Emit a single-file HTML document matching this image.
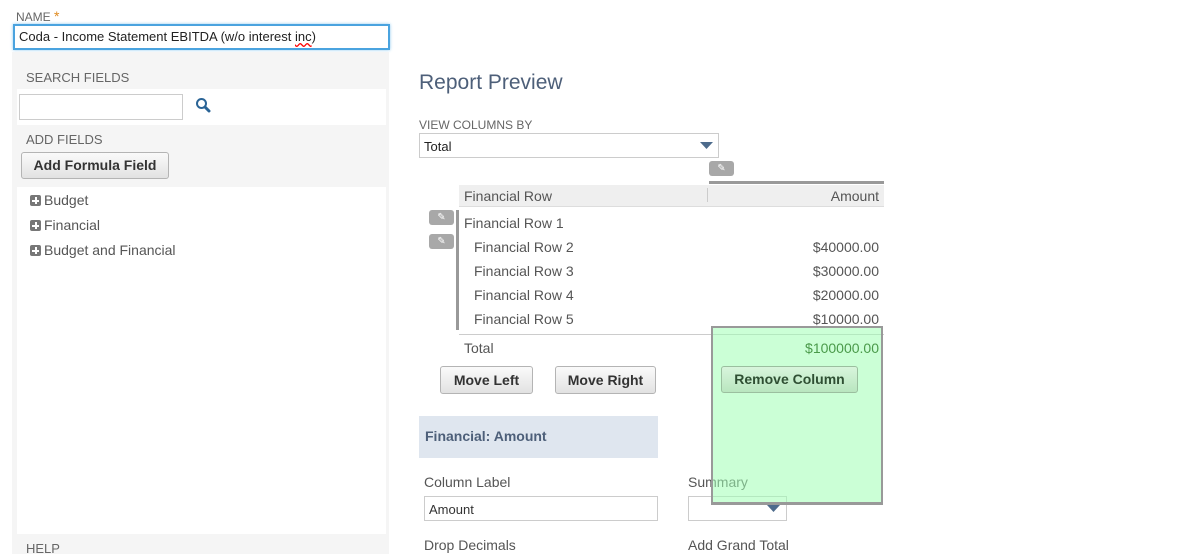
<!DOCTYPE html>
<html><head><meta charset="utf-8"><style>
*{box-sizing:border-box;margin:0;padding:0}
body{width:1201px;height:554px;overflow:hidden;background:#fff;font-family:"Liberation Sans",sans-serif;color:#555;position:relative;font-size:14px}
.a{position:absolute;white-space:nowrap}
.btn{position:absolute;border:1px solid #b4b4b4;border-radius:3px;background:linear-gradient(#fafafa,#e2e2e2);font-weight:bold;color:#333;font-size:14px;text-align:center}
.pen{position:absolute;width:25px;height:15px;background:#a8a8a8;border-radius:3px;color:#fff;font-size:10px;text-align:center;line-height:15px}
.plus{display:inline-block;width:11px;height:11px;background:#777;border-radius:2px;position:relative;vertical-align:-1px;margin-right:3px}
.plus:before{content:"";position:absolute;left:2px;top:4.5px;width:7px;height:2px;background:#fff}
.plus:after{content:"";position:absolute;left:4.5px;top:2px;width:2px;height:7px;background:#fff}
</style></head><body>
<div class="a" style="left:16px;top:8px;font-size:12px;color:#666">NAME <span style="color:#e08a1e;font-size:14px">*</span></div>
<div class="a" style="left:13px;top:24px;width:377px;height:26px;border:2px solid #4aa3df;font-size:13px;color:#222;padding:3px 4px;box-shadow:0 0 3px #8cc8f0">Coda - Income Statement EBITDA (w/o interest <span style="text-decoration:underline wavy red">inc</span>)</div>
<div class="a" style="left:12px;top:52px;width:377px;height:502px;background:#f5f5f5"></div>
<div class="a" style="left:26px;top:70px;font-size:13px;color:#666">SEARCH FIELDS</div>
<div class="a" style="left:17px;top:89px;width:369px;height:36px;background:#fff"></div>
<div class="a" style="left:19px;top:94px;width:164px;height:26px;border:1px solid #ccc;background:#fff"></div>
<svg class="a" style="left:195px;top:97px" width="16" height="16"><circle cx="6.5" cy="6.5" r="4.5" fill="none" stroke="#2a6496" stroke-width="2"/><path d="M10 10 L14 14" stroke="#2a6496" stroke-width="3" stroke-linecap="round"/></svg>
<div class="a" style="left:26px;top:132px;font-size:13px;color:#666">ADD FIELDS</div>
<div class="btn" style="left:21px;top:152px;width:148px;height:27px;line-height:25px">Add Formula Field</div>
<div class="a" style="left:17px;top:187px;width:369px;height:347px;background:#fff"></div>
<div class="a" style="left:30px;top:192px"><span class="plus"></span>Budget</div>
<div class="a" style="left:30px;top:217px"><span class="plus"></span>Financial</div>
<div class="a" style="left:30px;top:242px"><span class="plus"></span>Budget and Financial</div>
<div class="a" style="left:26px;top:541px;font-size:13px;color:#666">HELP</div>

<div class="a" style="left:419px;top:71px;font-size:21px;color:#4d5f79">Report Preview</div>
<div class="a" style="left:419px;top:118px;font-size:12px;color:#666">VIEW COLUMNS BY</div>
<div class="a" style="left:419px;top:133px;width:300px;height:25px;border:1px solid #ccc;font-size:13px;color:#222;padding:5px 4px">Total</div>
<svg class="a" style="left:700px;top:142px" width="13" height="8"><path d="M0 0H13L6.5 7Z" fill="#4d6b8c"/></svg>
<div class="pen" style="left:709px;top:161px">✎</div>
<div class="a" style="left:709px;top:181px;width:175px;height:3px;background:#999"></div>
<div class="a" style="left:459px;top:185px;width:425px;height:22px;background:#efefef;border-bottom:1px solid #ddd"></div>
<div class="a" style="left:464px;top:188px">Financial Row</div>
<div class="a" style="left:707px;top:188px;width:1px;height:14px;background:#ccc"></div>
<div class="a" style="right:322px;top:188px">Amount</div>
<div class="pen" style="left:429px;top:210px">✎</div>
<div class="pen" style="left:429px;top:234px">✎</div>
<div class="a" style="left:456px;top:210px;width:3px;height:120px;background:#999"></div>
<div class="a" style="left:464px;top:215px">Financial Row 1</div>
<div class="a" style="left:474px;top:239px">Financial Row 2</div>
<div class="a" style="left:474px;top:263px">Financial Row 3</div>
<div class="a" style="left:474px;top:287px">Financial Row 4</div>
<div class="a" style="left:474px;top:311px">Financial Row 5</div>
<div class="a" style="right:322px;top:239px">$40000.00</div>
<div class="a" style="right:322px;top:263px">$30000.00</div>
<div class="a" style="right:322px;top:287px">$20000.00</div>
<div class="a" style="right:322px;top:311px">$10000.00</div>
<div class="a" style="left:459px;top:334px;width:425px;height:1px;background:#ccc"></div>
<div class="a" style="left:464px;top:340px">Total</div>
<div class="btn" style="left:440px;top:366px;width:93px;height:28px;line-height:26px">Move Left</div>
<div class="btn" style="left:555px;top:366px;width:101px;height:28px;line-height:26px">Move Right</div>
<div class="a" style="left:419px;top:416px;width:239px;height:42px;background:#dfe6ef;font-weight:bold;color:#4d5f79;font-size:14px;padding:12px 6px">Financial: Amount</div>
<div class="a" style="left:424px;top:474px">Column Label</div>
<div class="a" style="left:424px;top:496px;width:234px;height:25px;border:1px solid #ccc;font-size:13px;color:#333;padding:5px 4px">Amount</div>
<div class="a" style="left:688px;top:474px">Summary</div>
<div class="a" style="left:688px;top:496px;width:99px;height:25px;border:1px solid #ccc"></div>
<svg class="a" style="left:767px;top:505px" width="13" height="8"><path d="M0 0H13L6.5 7Z" fill="#4d6b8c"/></svg>
<div class="a" style="left:424px;top:537px">Drop Decimals</div>
<div class="a" style="left:688px;top:537px">Add Grand Total</div>

<div class="a" style="left:711px;top:326px;width:172px;height:179px;background:rgba(160,255,180,0.55);border:2px solid #999;border-bottom-width:3px"></div>
<div class="a" style="right:322px;top:340px;color:#4a9a4a">$100000.00</div>
<div class="btn" style="left:721px;top:366px;width:137px;height:27px;line-height:25px;background:linear-gradient(#d8f5dc,#b9e6bf);border-color:#9bbf9f;color:#2f4f33">Remove Column</div>
</body></html>
